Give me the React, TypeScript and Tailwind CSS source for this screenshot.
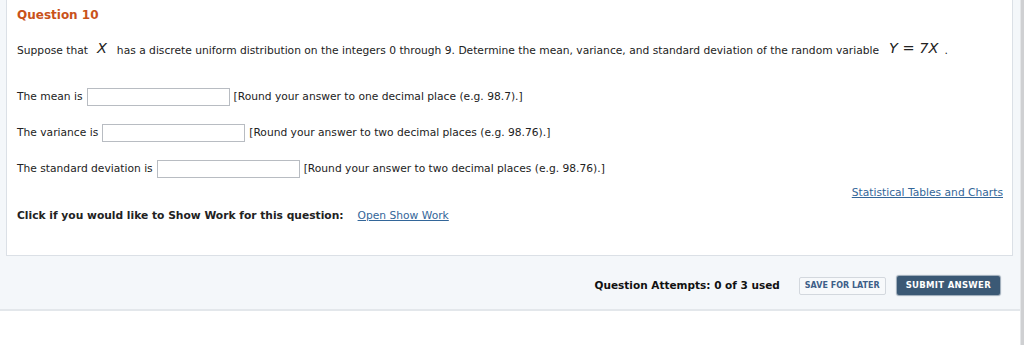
import React from 'react';

const hintFont = { fontFamily: '"DejaVu Sans", Verdana, sans-serif' };

function AnswerRow({ label, hint }: { label: string; hint: string }) {
  return (
    <div className="flex items-center h-[18px]">
      <span>{label}</span>
      <input
        type="text"
        className="ml-[4px] w-[143px] h-[18px] border border-[#b8bcc2] bg-white outline-none"
      />
      <span className="ml-[4px]">{hint}</span>
    </div>
  );
}

export default function App() {
  return (
    <div className="flex min-h-screen text-[#222]" style={hintFont}>
      <div className="flex-1 flex flex-col">
        <div className="bg-[#f4f7fa] pl-[6px] pr-[7px]">
          <div className="bg-white border-x border-b border-[#dbe0e6] pl-[10px] pr-[9px] pt-[7px] pb-[31px] text-[10.7px]">
            <div className="text-[#c9521a] font-bold text-[12px] leading-[16px]">Question 10</div>

            <div className="mt-[20px] flex items-end leading-[16px] whitespace-nowrap">
              <span>Suppose that</span>
              <span className="italic text-[14.5px] ml-[9px] mr-[10px] relative -top-[3px] leading-[16px]">X</span>
              <span>has a discrete uniform distribution on the integers 0 through 9. Determine the mean, variance, and standard deviation of the random variable</span>
              <span className="italic text-[14.5px] ml-[10px] mr-[6px] relative -top-[3px] leading-[16px]">
                Y <span className="not-italic">=</span> 7X
              </span>
              <span>.</span>
            </div>

            <div className="mt-[29px] flex flex-col gap-[18px]">
              <AnswerRow label="The mean is" hint="[Round your answer to one decimal place (e.g. 98.7).]" />
              <AnswerRow label="The variance is" hint="[Round your answer to two decimal places (e.g. 98.76).]" />
              <AnswerRow label="The standard deviation is" hint="[Round your answer to two decimal places (e.g. 98.76).]" />
            </div>

            <div className="mt-[7px] flex justify-end">
              <a href="#" className="text-[#336699] underline">Statistical Tables and Charts</a>
            </div>

            <div className="mt-[7px] flex items-center">
              <span className="font-bold">Click if you would like to Show Work for this question:</span>
              <a href="#" className="ml-[14px] text-[#336699] underline">Open Show Work</a>
            </div>
          </div>

          <div className="h-[53px] pt-[6px] flex items-center justify-end pr-[13px]">
            <span className="font-bold text-[10.5px] text-[#111]">Question Attempts: 0 of 3 used</span>
            <button className="ml-[19px] h-[18px] px-[5px] border border-[#d3d8de] rounded-[2px] bg-[#f7f9fb] text-[#3e5f88] font-bold text-[8px]">
              SAVE FOR LATER
            </button>
            <button className="ml-[11px] h-[19px] px-[9px] rounded-[2px] bg-[#3b5975] text-white font-bold text-[8.5px] tracking-[0.3px] shadow-[0_0_1px_1px_#9aa8b6]">
              SUBMIT ANSWER
            </button>
          </div>
        </div>
        <div className="h-[2px] bg-[#e3e7eb]" />
        <div className="flex-1 bg-white" />
      </div>
      <div className="w-[4px] bg-[#cfd0d2] border-l border-[#e4e6e8]" />
    </div>
  );
}
